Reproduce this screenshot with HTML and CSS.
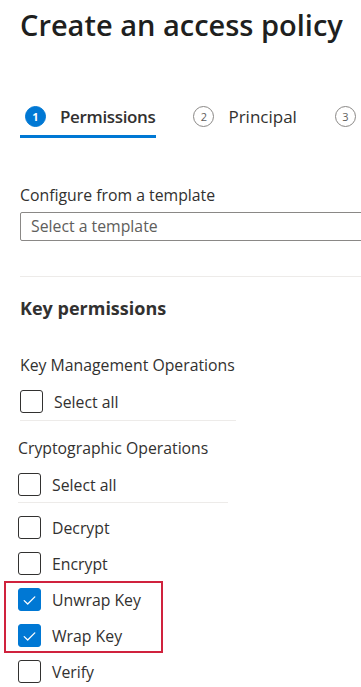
FILE: index.html
```html
<!DOCTYPE html>
<html lang="en">
<head>
<meta charset="utf-8">
<title>Create an access policy</title>
<link rel="stylesheet" href="styles.css">
</head>
<body>
<div class="page">
  <h1 class="title">Create an access policy</h1>

  <nav class="tabs">
    <div class="tab tab-active">
      <span class="step step-active">1</span>
      <span class="tab-label">Permissions</span>
    </div>
    <div class="tab">
      <span class="step">2</span>
      <span class="tab-label">Principal</span>
    </div>
    <div class="tab">
      <span class="step">3</span>
    </div>
  </nav>

  <div class="field">
    <label class="field-label">Configure from a template</label>
    <div class="dropdown">Select a template</div>
  </div>

  <div class="divider"></div>

  <h2 class="section-title">Key permissions</h2>

  <div class="group">
    <div class="group-label">Key Management Operations</div>
    <div class="check-row">
      <span class="box"></span><span class="check-text">Select all</span>
    </div>
    <div class="group-rule rule-a"></div>
  </div>

  <div class="group group-b">
    <div class="group-label">Cryptographic Operations</div>
    <div class="check-row">
      <span class="box"></span><span class="check-text">Select all</span>
    </div>
    <div class="group-rule rule-b"></div>

    <div class="list">
      <div class="check-row"><span class="box"></span><span class="check-text">Decrypt</span></div>
      <div class="check-row"><span class="box"></span><span class="check-text">Encrypt</span></div>
      <div class="highlight">
        <div class="check-row"><span class="box box-on"><svg viewBox="0 0 21 21" width="21" height="21"><path d="M5.2 11.6 L8.7 15 L15.8 7.9" fill="none" stroke="#fff" stroke-width="1.3" stroke-linecap="round" stroke-linejoin="round"/></svg></span><span class="check-text">Unwrap Key</span></div>
        <div class="check-row"><span class="box box-on"><svg viewBox="0 0 21 21" width="21" height="21"><path d="M5.2 11.6 L8.7 15 L15.8 7.9" fill="none" stroke="#fff" stroke-width="1.3" stroke-linecap="round" stroke-linejoin="round"/></svg></span><span class="check-text">Wrap Key</span></div>
      </div>
      <div class="check-row"><span class="box"></span><span class="check-text">Verify</span></div>
    </div>
  </div>
</div>
</body>
</html>
```

FILE: styles.css
```css
* { box-sizing: border-box; }
html, body {
  margin: 0;
  padding: 0;
  background: #ffffff;
  overflow: hidden;
}
body {
  font-family: "Open Sans", "Noto Sans", "Liberation Sans", sans-serif;
  color: #323130;
  width: 361px;
  height: 687px;
}
.page {
  padding-left: 20px;
  overflow: hidden;
  height: 687px;
}
.title {
  margin: 0;
  padding-top: 5px;
  font-size: 29px;
  line-height: 40px;
  font-weight: 600;
  color: #201f1e;
  white-space: nowrap;
}
.tabs {
  display: flex;
  margin-top: 52px;
  gap: 32px;
  white-space: nowrap;
}
.tab {
  display: flex;
  align-items: center;
  gap: 14px;
  height: 41px;
  padding: 0 1px 0 5px;
  border-bottom: 3px solid transparent;
  flex: none;
}
.tab-active {
  border-bottom-color: #0078d4;
}
.step {
  width: 21px;
  height: 21px;
  border-radius: 50%;
  border: 1px solid #8a8886;
  color: #605e5c;
  font-size: 11px;
  display: flex;
  align-items: center;
  justify-content: center;
  flex: none;
}
.step-active {
  background: #0078d4;
  border-color: #0078d4;
  color: #ffffff;
  font-weight: 700;
}
.tab-label {
  font-size: 17px;
  color: #323130;
}
.tab-active .tab-label {
  font-weight: 600;
  letter-spacing: -0.35px;
}
.field {
  margin-top: 46px;
  display: flex;
  flex-direction: column;
}
.field-label {
  font-size: 15.8px;
  line-height: 22px;
  height: 28px;
}
.dropdown {
  width: 380px;
  height: 29px;
  border: 1px solid #8a8886;
  border-radius: 2px;
  font-size: 15.8px;
  line-height: 26px;
  padding-left: 10px;
  color: #605e5c;
}
.divider {
  margin-top: 35px;
  height: 1px;
  background: #edebe9;
  width: 360px;
}
.section-title {
  margin: 0;
  padding-top: 19px;
  font-size: 18px;
  line-height: 24px;
  font-weight: 700;
  color: #323130;
}
.group {
  margin-top: 34px;
  display: flex;
  flex-direction: column;
}
.group-label {
  font-size: 15.8px;
  line-height: 22px;
  height: 36px;
}
.check-row {
  display: flex;
  align-items: center;
  height: 23px;
}
.box {
  width: 23px;
  height: 23px;
  border: 1px solid #323130;
  border-radius: 3px;
  flex: none;
  display: flex;
  align-items: center;
  justify-content: center;
}
.box-on {
  background: #0078d4;
  border-color: #0078d4;
}
.box-on svg { display: block; }
.check-text {
  margin-left: 11px;
  font-size: 15.8px;
  line-height: 22px;
  color: #323130;
}
.group-rule {
  height: 1px;
  background: #edebe9;
  margin-top: 7px;
}
.rule-a { width: 216px; }
.group-b {
  margin-left: -2px;
  margin-top: 16px;
}
.rule-b { width: 210px; margin-top: 6px; }
.list {
  margin-top: 13px;
  display: flex;
  flex-direction: column;
  gap: 13px;
}
.highlight {
  margin-left: -14px;
  width: 159px;
  padding: 5px 0 4px 12px;
  border: 2px solid #d0223d;
  display: flex;
  flex-direction: column;
  gap: 13px;
  margin-top: -7px;
  margin-bottom: -6px;
}
```
